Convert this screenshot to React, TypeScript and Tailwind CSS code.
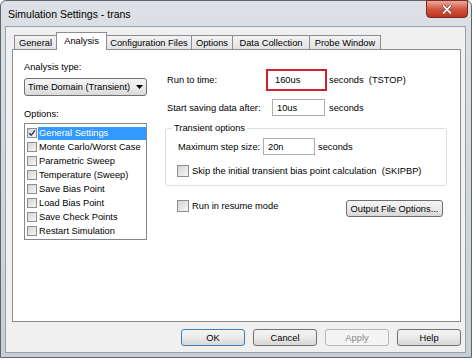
import React from 'react';

const tabs = [
  { label: 'General', w: 'w-[43px]' },
  { label: 'Analysis', w: 'w-[51px]', active: true },
  { label: 'Configuration Files', w: 'w-[86px]' },
  { label: 'Options', w: 'w-[42px]' },
  { label: 'Data Collection', w: 'w-[78px]' },
  { label: 'Probe Window', w: 'w-[72px]' },
];

const options = [
  'General Settings',
  'Monte Carlo/Worst Case',
  'Parametric Sweep',
  'Temperature (Sweep)',
  'Save Bias Point',
  'Load Bias Point',
  'Save Check Points',
  'Restart Simulation',
];

const CheckBox: React.FC<{ checked?: boolean; small?: boolean }> = ({ checked, small }) => (
  <span
    className={
      (small ? 'w-[10px] h-[10px] ' : 'w-[12px] h-[12px] ') +
      'shrink-0 flex items-center justify-center border border-[#8f8f8f] bg-gradient-to-br from-[#d4d4d4] to-[#f7f7f7]'
    }
  >
    {checked && (
      <svg width="10" height="10" viewBox="0 0 10 10">
        <path d="M1.5 5.2 L4 7.8 L8.8 1.8" fill="none" stroke="#1c3d7a" strokeWidth="1.7" />
      </svg>
    )}
  </span>
);

const Button: React.FC<{ children: React.ReactNode; className?: string; disabled?: boolean; focused?: boolean }> = ({
  children,
  className = '',
  disabled,
  focused,
}) => (
  <div
    className={
      'h-[17px] flex items-center justify-center rounded-[3px] border ' +
      (disabled
        ? 'border-[#b5b9bc] bg-[#f4f4f4] text-[#8a8a8a] '
        : focused
          ? 'border-[#3c7fb1] bg-gradient-to-b from-[#f4f4f4] via-[#ebebeb] to-[#d6d6d6] '
          : 'border-[#707070] bg-gradient-to-b from-[#f4f4f4] via-[#ebebeb] to-[#d6d6d6] ') +
      className
    }
  >
    {children}
  </div>
);

export default function App() {
  return (
    <div className="w-[474px] h-[361px] bg-white font-['Liberation_Sans',Arial,sans-serif] text-[9.3px] leading-[12px] text-black">
      {/* window frame */}
      <div className="w-[472px] h-[358px] border border-[#5f646b] rounded-t-[6px] bg-gradient-to-b from-[#dde0e4] to-[#c9ced4] flex flex-col">
        {/* title bar */}
        <div className="h-[25px] flex justify-between">
          <span className="self-center pl-[7px] text-[10.5px] leading-[14px]">Simulation Settings - trans</span>
          <div className="-mt-px mr-[3px] w-[42px] h-[18px] rounded-b-[4px] border border-[#7a2a22] bg-gradient-to-b from-[#e9a99b] via-[#d2553f] to-[#c0341f] flex items-center justify-center">
            <svg width="10" height="9" viewBox="0 0 10 9">
              <path d="M1.5 1 L8.5 8 M8.5 1 L1.5 8" stroke="#5a1a12" strokeWidth="2.8" strokeLinecap="round" />
              <path d="M1.5 1 L8.5 8 M8.5 1 L1.5 8" stroke="#ffffff" strokeWidth="1.8" strokeLinecap="round" />
            </svg>
          </div>
        </div>

        {/* client area */}
        <div className="ml-[4px] w-[461px] h-[327px] border border-[#9ba0a6] bg-[#f0f0f0] pt-[5px] pl-[6px] pr-[4px]">
          {/* tabs */}
          <div className="h-[17px] flex items-end pl-[2px]">
            {tabs.map((t) =>
              t.active ? (
                <div
                  key={t.label}
                  className={t.w + ' relative z-10 -ml-px -mb-px h-[18px] border border-b-0 border-[#898c95] bg-white flex items-start justify-center pt-[2px]'}
                >
                  {t.label}
                </div>
              ) : (
                <div
                  key={t.label}
                  className={t.w + ' -ml-px first:ml-0 h-[14px] border border-b-0 border-[#898c95] bg-gradient-to-b from-[#f3f3f3] to-[#e2e2e2] flex items-center justify-center'}
                >
                  {t.label}
                </div>
              )
            )}
          </div>

          {/* tab panel */}
          <div className="w-[449px] h-[273px] border border-[#898c95] bg-white pt-[11px] pl-[11px] flex">
            {/* left column */}
            <div className="w-[123px] flex flex-col">
              <div className="h-[12px]">Analysis type:</div>
              <div className="mt-[5px] h-[18px] rounded-[3px] border border-[#707070] bg-gradient-to-b from-[#f4f4f4] via-[#ebebeb] to-[#d9d9d9] flex items-center justify-between pl-[3px] pr-[3px]">
                <span>Time Domain (Transient)</span>
                <svg width="7" height="4" viewBox="0 0 7 4">
                  <path d="M0 0 H7 L3.5 4 Z" fill="#000" />
                </svg>
              </div>
              <div className="mt-[12px] h-[12px]">Options:</div>
              <div className="mt-[3px] h-[117px] border border-[#828790] bg-white pt-[2px] pl-[2px]">
                {options.map((o, i) => (
                  <div key={o} className="h-[14px] flex items-center">
                    <CheckBox small checked={i === 0} />
                    <span
                      className={
                        'ml-px flex-1 h-[13px] flex items-center pl-px ' + (i === 0 ? 'bg-[#3399ff] text-white' : '')
                      }
                    >
                      {o}
                    </span>
                  </div>
                ))}
              </div>
            </div>

            {/* right column */}
            <div className="ml-[18px] w-[282px] flex flex-col">
              <div className="mt-[8px] h-[22px] flex items-center">
                <span className="w-[101px] pl-[2px]">Run to time:</span>
                <div className="w-[61px] h-[22px] border-2 border-[#c8252c] bg-white flex items-center pl-[7px]">160us</div>
                <span className="ml-[2px] whitespace-pre">seconds  (TSTOP)</span>
              </div>

              <div className="mt-[8px] h-[17px] flex items-center">
                <span className="w-[107px] pl-[2px]">Start saving data after:</span>
                <div className="w-[53px] h-[17px] border border-[#abadb3] bg-white flex items-center pl-[4px]">10us</div>
                <span className="ml-[4px]">seconds</span>
              </div>

              <fieldset className="mt-[6px] border border-[#d5dfe5] rounded-[3px] pb-[7px]">
                <legend className="ml-[6px] px-[2px] leading-[12px]">Transient options</legend>
                <div className="mt-[4px] h-[17px] flex items-center pl-[12px]">
                  <span className="w-[85px]">Maximum step size:</span>
                  <div className="w-[52px] h-[17px] border border-[#abadb3] bg-white flex items-center pl-[4px]">20n</div>
                  <span className="ml-[3px]">seconds</span>
                </div>
                <div className="mt-[9px] h-[14px] flex items-center pl-[11px]">
                  <CheckBox />
                  <span className="ml-[3px] whitespace-pre">Skip the initial transient bias point calculation  (SKIPBP)</span>
                </div>
              </fieldset>

              <div className="mt-[13px] flex items-start justify-between pr-[4px]">
                <div className="h-[14px] flex items-center pl-[12px]">
                  <CheckBox />
                  <span className="ml-[3px]">Run in resume mode</span>
                </div>
                <Button className="mt-px w-[97px]">Output File Options...</Button>
              </div>
            </div>
          </div>

          {/* dialog buttons */}
          <div className="mt-[7px] w-[449px] flex justify-end gap-[8px]">
            <Button focused className="w-[64px]">OK</Button>
            <Button className="w-[64px]">Cancel</Button>
            <Button disabled className="w-[64px]">Apply</Button>
            <Button className="w-[64px]">Help</Button>
          </div>
        </div>
      </div>
    </div>
  );
}
